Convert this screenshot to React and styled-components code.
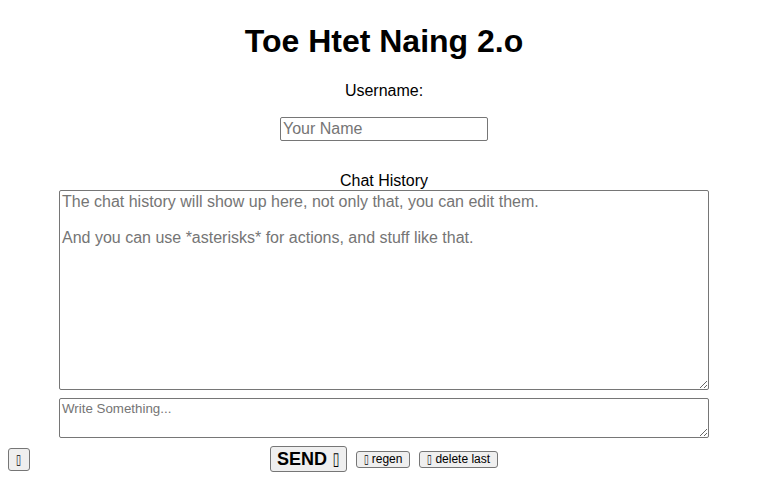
import { useState } from 'react'
import styled, { createGlobalStyle } from 'styled-components'

const BOX = '\u25AF'

const App = () => {
  const [name, setName] = useState('')
  const [history, setHistory] = useState('')
  const [message, setMessage] = useState('')
  return (
    <>
      <GlobalStyle />
      <Page>
        <Title>Toe Htet Naing 2.o</Title>
        <Label htmlFor='username'>Username:</Label>
        <NameInput id='username' type='text' value={name} onChange={(e) => setName(e.target.value)} placeholder='Your Name' />
        <HistoryLabel>Chat History</HistoryLabel>
        <HistoryArea
          value={history}
          onChange={(e) => setHistory(e.target.value)}
          placeholder={'The chat history will show up here, not only that, you can edit them.\n\nAnd you can use *asterisks* for actions, and stuff like that.'}
        />
        <MessageArea value={message} onChange={(e) => setMessage(e.target.value)} placeholder='Write Something...' />
        <ActionRow>
          <ThemeButton><Glyph>{BOX}</Glyph></ThemeButton>
          <Actions>
            <SendButton>SEND <Glyph>{BOX}</Glyph></SendButton>
            <SmallButton><Glyph>{BOX}</Glyph> regen</SmallButton>
            <SmallButton><Glyph>{BOX}</Glyph> delete last</SmallButton>
          </Actions>
          <span />
        </ActionRow>
      </Page>
    </>
  )
}

const GlobalStyle = createGlobalStyle`
  body {
    margin: 8px;
    background: #fff;
    font-family: "Liberation Sans", Arial, sans-serif;
    color: #000;
  }
`

const Page = styled.div`
  display: flex;
  flex-direction: column;
  align-items: center;
`

const Title = styled.h1`
  font-size: 32px;
  font-weight: bold;
  margin: 15px 0 21px;
  line-height: 37px;
`

const Label = styled.label`
  font-size: 16px;
  line-height: 18px;
  margin-top: 1px;
`

const NameInput = styled.input`
  margin-top: 17px;
  width: 208px;
  height: 24px;
  box-sizing: border-box;
  font-family: "Liberation Sans", Arial, sans-serif;
  font-size: 16px;
  padding: 1px 2px;
  border: 1px solid #767676;
  border-radius: 2px;
  &::placeholder { color: #757575; }
`

const HistoryLabel = styled.div`
  margin-top: 31px;
  font-size: 16px;
  line-height: 18px;
`

const BaseArea = styled.textarea`
  width: 650px;
  box-sizing: border-box;
  font-family: "Liberation Sans", Arial, sans-serif;
  border: 1px solid #767676;
  border-radius: 2px;
  padding: 2px;
  resize: vertical;
  &::placeholder { color: #757575; }
`

const HistoryArea = styled(BaseArea)`
  height: 200px;
  font-size: 16px;
`

const MessageArea = styled(BaseArea)`
  margin-top: 8px;
  height: 40px;
  font-size: 13.33px;
`

const ActionRow = styled.div`
  align-self: stretch;
  margin-top: 8px;
  display: grid;
  grid-template-columns: 1fr auto 1fr;
  align-items: center;
`

const Glyph = styled.span`
  font-family: "DejaVu Sans", sans-serif;
  font-weight: normal;
  font-size: 1em;
  display: inline-block;
  transform: scaleX(0.7);
  margin: 0 -1px;
`

const ButtonBase = styled.button`
  font-family: "Liberation Sans", Arial, sans-serif;
  background: #efefef;
  border: 1px solid #767676;
  border-radius: 3px;
  color: #000;
`

const ThemeButton = styled(ButtonBase)`
  justify-self: start;
  width: 22px;
  height: 23px;
  padding: 0;
  font-size: 13.33px;
`

const Actions = styled.div`
  display: flex;
  align-items: center;
  gap: 9px;
`

const SendButton = styled(ButtonBase)`
  height: 26px;
  padding: 0 6px;
  font-size: 18px;
  font-weight: bold;
`

const SmallButton = styled(ButtonBase)`
  height: 17px;
  padding: 0 7px;
  font-size: 12px;
`

export default App
